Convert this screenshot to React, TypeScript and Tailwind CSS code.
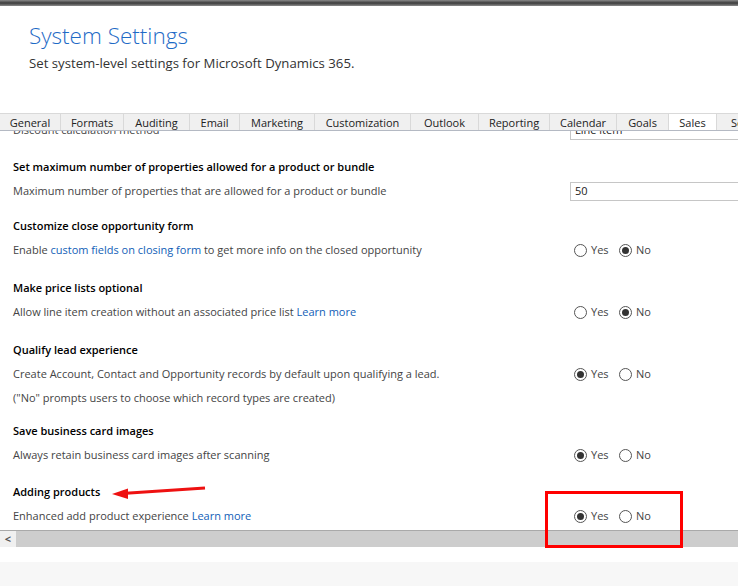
import React from "react";

const tabs = [
  { label: "General", w: "w-[61px]" },
  { label: "Formats", w: "w-[63px]" },
  { label: "Auditing", w: "w-[66px]" },
  { label: "Email", w: "w-[50px]" },
  { label: "Marketing", w: "w-[75px]" },
  { label: "Customization", w: "w-[96px]" },
  { label: "Outlook", w: "w-[68px]" },
  { label: "Reporting", w: "w-[71px]" },
  { label: "Calendar", w: "w-[67px]" },
  { label: "Goals", w: "w-[52px]" },
  { label: "Sales", w: "w-[48px]", active: true },
  { label: "Security", w: "w-[70px]" },
];

const Radio = ({ checked }: { checked: boolean }) => (
  <span className="flex h-[13px] w-[13px] items-center justify-center rounded-full border border-[#555]">
    {checked && <span className="h-[7px] w-[7px] rounded-full bg-[#333]" />}
  </span>
);

const YesNo = ({ yes }: { yes: boolean }) => (
  <div className="flex items-center pl-[4px] text-[#444]">
    <Radio checked={yes} />
    <span className="ml-[4px] w-[28px]">Yes</span>
    <Radio checked={!yes} />
    <span className="ml-[4px]">No</span>
  </div>
);

const Link = ({ children }: { children: React.ReactNode }) => (
  <span className="text-[#1160b7]">{children}</span>
);

type Row = {
  title: string;
  desc: React.ReactNode;
  extra?: string;
  pb: string;
  control: React.ReactNode;
};

const rows: Row[] = [
  {
    title: "Set maximum number of properties allowed for a product or bundle",
    desc: "Maximum number of properties that are allowed for a product or bundle",
    pb: "pb-[11px]",
    control: (
      <div className="flex h-[19px] w-[200px] items-center border border-[#c6c6c6] pl-[4px] text-[#222]">50</div>
    ),
  },
  {
    title: "Customize close opportunity form",
    desc: (
      <>
        Enable <Link>custom fields on closing form</Link> to get more info on the closed opportunity
      </>
    ),
    pb: "pb-[14px]",
    control: <YesNo yes={false} />,
  },
  {
    title: "Make price lists optional",
    desc: (
      <>
        Allow line item creation without an associated price list <Link>Learn more</Link>
      </>
    ),
    pb: "pb-[14px]",
    control: <YesNo yes={false} />,
  },
  {
    title: "Qualify lead experience",
    desc: "Create Account, Contact and Opportunity records by default upon qualifying a lead.",
    extra: "(\"No\" prompts users to choose which record types are created)",
    pb: "pb-[10px]",
    control: <YesNo yes={true} />,
  },
  {
    title: "Save business card images",
    desc: "Always retain business card images after scanning",
    pb: "pb-[13px]",
    control: <YesNo yes={true} />,
  },
  {
    title: "Adding products",
    desc: (
      <>
        Enhanced add product experience <Link>Learn more</Link>
      </>
    ),
    pb: "pb-[13px]",
    control: <YesNo yes={true} />,
  },
];

export default function App() {
  return (
    <div className="relative h-[586px] w-[738px] overflow-hidden bg-white font-['Open_Sans',sans-serif] text-[11px]">
      {/* window chrome */}
      <div className="h-[6px] bg-linear-to-b from-[#8a8a8a] via-[#3c3c3c] to-[#8c8c8c]" />

      {/* header */}
      <div className="h-[107px] pl-[29px] pt-[14px]">
        <div className="text-[22.5px] font-light leading-[32px] text-[#1e6ac6]">System Settings</div>
        <div className="mt-[1px] text-[13.2px] leading-[20px] text-[#333]">
          Set system-level settings for Microsoft Dynamics 365.
        </div>
      </div>

      {/* tabs */}
      <div className="flex h-[18px] border-b border-[#b4b9c3]">
        {tabs.map((t) => (
          <div
            key={t.label}
            className={`${t.w} shrink-0 border-t border-r border-[#d9d9d9] text-center leading-[17px] text-[#222] ${
              t.active ? "bg-white" : "bg-[#f0f0f0]"
            }`}
          >
            {t.label}
          </div>
        ))}
      </div>

      {/* scrolled content */}
      <div className="h-[399px] overflow-hidden">
        <div className="-mt-[13px]">
          <div className="grid grid-cols-[570px_200px] pb-[13px]">
            <div className="pl-[13px] leading-[24px] text-[#444]">Discount calculation method</div>
            <div className="flex items-center">
              <div className="flex h-[19px] w-[200px] items-center border border-[#c6c6c6] pl-[4px] text-[#222]">
                Line item
              </div>
            </div>
          </div>
          {rows.map((r) => (
            <div key={r.title} className={`grid grid-cols-[570px_200px] ${r.pb}`}>
              <div className="pl-[13px] font-semibold leading-[24px] text-black">{r.title}</div>
              <div />
              <div className="pl-[13px] leading-[24px] text-[#444]">{r.desc}</div>
              <div className="flex items-center">{r.control}</div>
              {r.extra && <div className="pl-[13px] leading-[23px] text-[#444]">{r.extra}</div>}
            </div>
          ))}
        </div>
      </div>

      {/* horizontal scrollbar */}
      <div className="flex h-[17px] border-t border-[#a9a9a9]">
        <div className="flex w-[16px] items-center justify-center bg-[#f0f0f0] text-[11px] font-bold text-[#555]">
          &lt;
        </div>
        <div className="flex-1 bg-[#cdcdcd]" />
      </div>
      <div className="h-[15px] bg-white" />
      <div className="h-[30px] bg-[#f7f7f7]" />

      {/* annotations */}
      <svg className="absolute left-0 top-0" width="738" height="586">
        <line x1="205" y1="488" x2="122" y2="493.5" stroke="#ee1111" strokeWidth="3" />
        <polygon points="112,494 128,488.5 128,499" fill="#ee1111" />
      </svg>
      <div className="absolute left-[545px] top-[491px] h-[57px] w-[138px] border-[3px] border-[#ff0000]" />
    </div>
  );
}
